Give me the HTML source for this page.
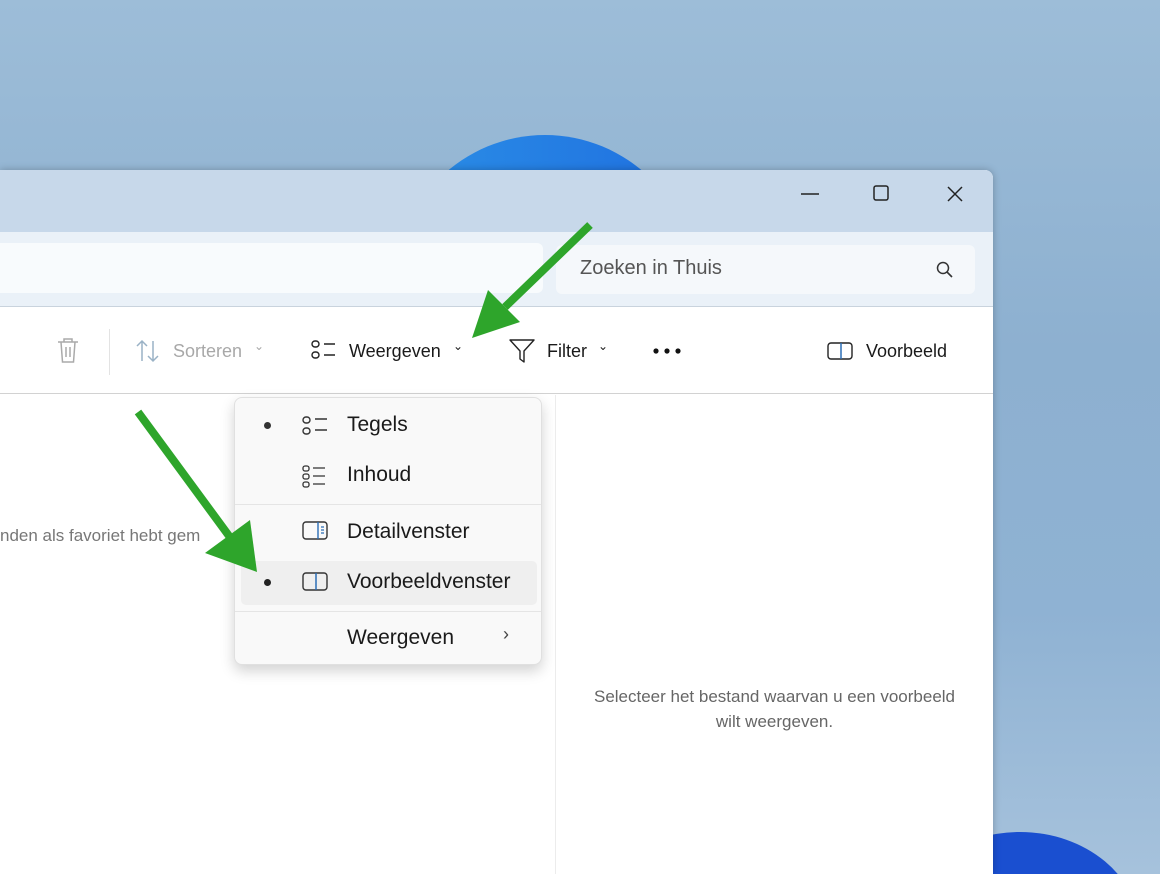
<!DOCTYPE html>
<html style="width:1160px;height:874px;overflow:hidden"><head><meta charset="utf-8"><style>
*{margin:0;padding:0;box-sizing:border-box}
body{width:1160px;height:874px;overflow:hidden;position:relative;font-family:"Segoe UI","Liberation Sans",sans-serif;background:linear-gradient(180deg,#9dbdd8 0%,#8db0d0 40%,#8fb2d3 70%,#a6c2dc 100%)}
.abs{position:absolute}
.win{left:0;top:170px;width:993px;height:704px;background:#fff;border-radius:0 8px 0 0;overflow:hidden;box-shadow:0 0 8px rgba(0,0,0,.25)}
.title{left:0;top:0;width:993px;height:62px;background:#c7d8ea}
.addr{left:0;top:62px;width:993px;height:75px;background:#eaf1f8;border-bottom:1px solid #c9d3dd}
.tb{left:0;top:137px;width:993px;height:87px;background:#fff;border-bottom:1px solid #d2d2d2}
.t{position:absolute;font-size:18px;color:#1a1a1a;white-space:nowrap}
.g{color:#a8a8a8}
.menu{left:234px;top:397px;width:308px;height:268px;background:#f9f9f9;border:1px solid #e0e0e0;border-radius:8px;box-shadow:0 6px 14px rgba(0,0,0,.18)}
.mi{position:absolute;font-size:21px;color:#1a1a1a}
</style></head><body>
<div class="abs" style="left:0;top:0;width:1160px;height:874px;overflow:hidden">
<div class="abs" style="left:395px;top:135px;width:300px;height:300px;border-radius:50%;background:linear-gradient(90deg,#2b8fe6,#1f6fe0)"></div>
<div class="abs" style="left:900px;top:832px;width:240px;height:200px;border-radius:50%;background:#1a4fd0"></div>
</div>
<div class="abs win">
 <div class="abs title"></div>
 <svg class="abs" style="left:795px;top:10px" width="180" height="30" viewBox="795 180 180 30">
  <line x1="801" y1="194" x2="819" y2="194" stroke="#222" stroke-width="1.5"/>
  <rect x="874" y="186" width="14" height="14" rx="2" fill="none" stroke="#222" stroke-width="1.5"/>
  <path d="M948 187 L962 201 M962 187 L948 201" stroke="#222" stroke-width="1.5"/>
 </svg>
 <div class="abs addr">
  <div class="abs" style="left:0;top:11px;width:543px;height:50px;background:#f8fbfd;border-radius:0 6px 6px 0"></div>
  <div class="abs" style="left:556px;top:13px;width:419px;height:49px;background:#f5f8fb;border-radius:6px"></div>
  <div class="t" style="left:580px;top:25px;font-size:20px;color:#555">Zoeken in Thuis</div>
  <svg class="abs" style="left:935px;top:28px" width="20" height="20"><circle cx="8" cy="8" r="5.5" fill="none" stroke="#333" stroke-width="1.5"/><line x1="12" y1="12" x2="17" y2="17" stroke="#333" stroke-width="1.6"/></svg>
 </div>
 <div class="abs tb">
  <svg class="abs" style="left:55px;top:30px" width="26" height="28"><path d="M3 5h20M9 5V2h8v3M6 5l1.5 20h11L20 5M11 10v10M15 10v10" fill="none" stroke="#aaa" stroke-width="1.5"/></svg>
  <div class="abs" style="left:109px;top:22px;width:1px;height:46px;background:#e3e3e3"></div>
  <svg class="abs" style="left:135px;top:32px" width="28" height="24"><path d="M7 22V2M2 7l5-5 5 5M18 2v20M13 17l5 5 5-5" fill="none" stroke="#9ab2c6" stroke-width="1.5"/></svg>
  <div class="t g" style="left:173px;top:34px">Sorteren</div>
  <div class="t g" style="left:254px;top:32px;font-size:12px">&#8964;</div>
  <svg class="abs" style="left:310px;top:32px" width="28" height="22"><rect x="2" y="2" width="7" height="6" rx="3" fill="none" stroke="#222" stroke-width="1.4"/><rect x="2" y="13" width="7" height="6" rx="3" fill="none" stroke="#222" stroke-width="1.4"/><path d="M14 5h11M14 16h11" stroke="#222" stroke-width="1.4"/></svg>
  <div class="t" style="left:349px;top:34px">Weergeven</div>
  <div class="t" style="left:453px;top:32px;font-size:12px">&#8964;</div>
  <svg class="abs" style="left:508px;top:30px" width="28" height="28"><path d="M2 3h24l-10 11v11l-4-3v-8z" fill="none" stroke="#222" stroke-width="1.4" stroke-linejoin="round"/></svg>
  <div class="t" style="left:547px;top:34px">Filter</div>
  <div class="t" style="left:598px;top:32px;font-size:12px">&#8964;</div>
  <svg class="abs" style="left:652px;top:40px" width="30" height="8"><circle cx="4" cy="4" r="2.6" fill="#111"/><circle cx="15" cy="4" r="2.6" fill="#111"/><circle cx="26" cy="4" r="2.6" fill="#111"/></svg>
  <svg class="abs" style="left:826px;top:33px" width="28" height="22"><rect x="2" y="3" width="24" height="16" rx="3" fill="none" stroke="#222" stroke-width="1.4"/><line x1="15" y1="3" x2="15" y2="19" stroke="#2a6db5" stroke-width="1.5"/></svg>
  <div class="t" style="left:866px;top:34px">Voorbeeld</div>
 </div>
 <div class="abs" style="left:555px;top:225px;width:1px;height:479px;background:#ececec"></div>
 <div class="t" style="left:0;top:356px;font-size:17px;color:#777">nden als favoriet hebt gem</div>
 <div class="t" style="left:556px;top:514px;width:437px;text-align:center;font-size:17px;color:#666;line-height:25px;white-space:normal">Selecteer het bestand waarvan u een voorbeeld<br>wilt weergeven.</div>
</div>
<div class="abs menu">
 <div class="abs" style="left:6px;top:163px;width:296px;height:44px;background:#efefef;border-radius:5px"></div>
 <div class="abs" style="left:0;top:106px;width:306px;height:1px;background:#e5e5e5"></div>
 <div class="abs" style="left:0;top:213px;width:306px;height:1px;background:#e5e5e5"></div>
 <div class="abs" style="left:29px;top:24px;width:7px;height:7px;border-radius:50%;background:#333"></div>
 <div class="abs" style="left:29px;top:181px;width:7px;height:7px;border-radius:50%;background:#222"></div>
 <svg class="abs" style="left:66px;top:17px" width="30" height="22"><rect x="2" y="2" width="7" height="6" rx="3" fill="none" stroke="#333" stroke-width="1.4"/><rect x="2" y="13" width="7" height="6" rx="3" fill="none" stroke="#333" stroke-width="1.4"/><path d="M14 4h12M14 15h12" stroke="#333" stroke-width="1.4"/></svg>
 <div class="mi" style="left:112px;top:15px">Tegels</div>
 <svg class="abs" style="left:66px;top:66px" width="30" height="26"><rect x="2" y="2" width="6" height="5" rx="2" fill="none" stroke="#333" stroke-width="1.3"/><rect x="2" y="10" width="6" height="5" rx="2" fill="none" stroke="#333" stroke-width="1.3"/><rect x="2" y="18" width="6" height="5" rx="2" fill="none" stroke="#333" stroke-width="1.3"/><path d="M12 4h12M12 12h12M12 20h12" stroke="#333" stroke-width="1.3"/></svg>
 <div class="mi" style="left:112px;top:65px">Inhoud</div>
 <svg class="abs" style="left:66px;top:122px" width="30" height="22"><rect x="2" y="2" width="24" height="17" rx="3" fill="none" stroke="#333" stroke-width="1.4"/><line x1="17" y1="2" x2="17" y2="19" stroke="#2a6db5" stroke-width="1.4"/><path d="M20 7h3M20 10h3M20 13h3" stroke="#2a6db5" stroke-width="1.2"/></svg>
 <div class="mi" style="left:112px;top:122px">Detailvenster</div>
 <svg class="abs" style="left:66px;top:173px" width="30" height="22"><rect x="2" y="2" width="24" height="17" rx="3" fill="none" stroke="#333" stroke-width="1.4"/><line x1="15" y1="2" x2="15" y2="19" stroke="#2a6db5" stroke-width="1.5"/></svg>
 <div class="mi" style="left:112px;top:172px">Voorbeeldvenster</div>
 <div class="mi" style="left:112px;top:228px">Weergeven</div>
 <div class="mi" style="left:268px;top:226px;font-size:18px;color:#444">›</div>
</div>
<svg class="abs" style="left:0;top:0" width="1160" height="874">
 <line x1="590" y1="225" x2="505" y2="307" stroke="#2ea52b" stroke-width="8"/>
 <polygon points="472,338 488,290 520,322" fill="#2ea52b"/>
 <line x1="138" y1="412" x2="232" y2="540" stroke="#2ea52b" stroke-width="8"/>
 <polygon points="257,572 205,553 250,520" fill="#2ea52b"/>
</svg>
</body></html>
